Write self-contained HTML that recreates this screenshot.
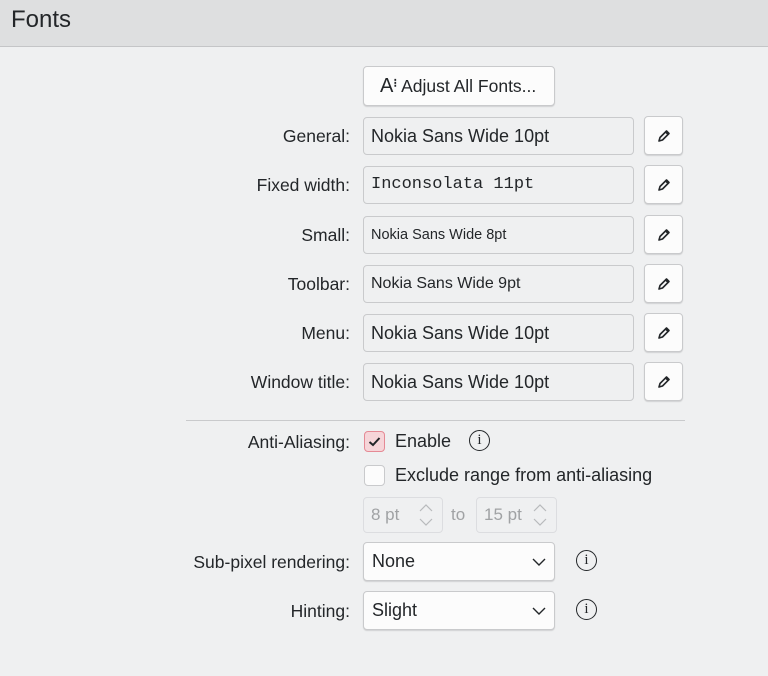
<!DOCTYPE html><html><head><style>
body{margin:0;width:768px;height:676px;background:#eff0f1;font-family:"Liberation Sans",sans-serif;color:#232629;position:relative;overflow:hidden}
.hdr{position:absolute;left:0;top:0;width:768px;height:46px;background:#dedfe0;border-bottom:1px solid #c4c5c7;}
.hdr span{position:absolute;left:11px;top:6px;font-size:24px}
.a{position:absolute}
.lbl{position:absolute;right:418px;font-size:17.5px;text-align:right;white-space:nowrap}
.fld{position:absolute;left:363px;width:271px;height:38px;border:1px solid #c9cacc;border-radius:4px;background:#eff0f1;box-sizing:border-box;font-size:18px;line-height:36px;padding-left:7px}
.btn{position:absolute;left:644px;width:39px;height:39px;border:1px solid #c9cacc;border-radius:4px;background:#fcfcfc;box-sizing:border-box;box-shadow:0 1px 1px #d0d1d2}
.btn svg{position:absolute;left:11px;top:11px}
.combo{position:absolute;left:363px;width:192px;height:39px;border:1px solid #c9cacc;border-radius:4px;background:#fcfcfc;box-sizing:border-box;font-size:18px;line-height:37px;padding-left:8px;box-shadow:0 1px 1px #d0d1d2}
.combo svg{position:absolute;right:8px;top:14px}
.info{position:absolute;width:19px;height:19px;border:1.6px solid #232629;border-radius:50%;font-size:15px;text-align:center;line-height:19px;font-family:"Liberation Serif",serif}
</style></head><body>
<div class="hdr"><span>Fonts</span></div>
<div class="a" style="left:363px;top:66px;width:192px;height:40px;border:1px solid #c9cacc;border-radius:4px;background:#fcfcfc;box-sizing:border-box;box-shadow:0 1px 1px #d0d1d2;font-size:17.5px;line-height:38px;padding-left:16px;white-space:nowrap"><span style="font-size:20px">A</span><span style="font-size:12px;position:relative;top:-5px;font-weight:bold">⁝</span> Adjust All Fonts...</div>

<div class="lbl" style="top:126px">General:</div>
<div class="fld" style="top:117px">Nokia Sans Wide 10pt</div>
<div class="lbl" style="top:175px">Fixed width:</div>
<div class="fld" style="top:166px;font-family:'Liberation Mono',monospace;font-size:17px">Inconsolata 11pt</div>
<div class="lbl" style="top:225px">Small:</div>
<div class="fld" style="top:216px;font-size:14.5px">Nokia Sans Wide 8pt</div>
<div class="lbl" style="top:274px">Toolbar:</div>
<div class="fld" style="top:265px;font-size:16px">Nokia Sans Wide 9pt</div>
<div class="lbl" style="top:323px">Menu:</div>
<div class="fld" style="top:314px">Nokia Sans Wide 10pt</div>
<div class="lbl" style="top:372px">Window title:</div>
<div class="fld" style="top:363px">Nokia Sans Wide 10pt</div>

<div class="btn" style="top:116px"><svg width="16" height="16" viewBox="0 0 16 16"><path d="M3 13 L4 9.5 L10.5 3 L13 5.5 L6.5 12 Z" fill="none" stroke="#232629" stroke-width="1.6" stroke-linejoin="round"/><path d="M9 4.5 L11.5 7 L13 5.5 L10.5 3Z" fill="#232629"/></svg></div>
<div class="btn" style="top:165px"><svg width="16" height="16" viewBox="0 0 16 16"><path d="M3 13 L4 9.5 L10.5 3 L13 5.5 L6.5 12 Z" fill="none" stroke="#232629" stroke-width="1.6" stroke-linejoin="round"/><path d="M9 4.5 L11.5 7 L13 5.5 L10.5 3Z" fill="#232629"/></svg></div>
<div class="btn" style="top:215px"><svg width="16" height="16" viewBox="0 0 16 16"><path d="M3 13 L4 9.5 L10.5 3 L13 5.5 L6.5 12 Z" fill="none" stroke="#232629" stroke-width="1.6" stroke-linejoin="round"/><path d="M9 4.5 L11.5 7 L13 5.5 L10.5 3Z" fill="#232629"/></svg></div>
<div class="btn" style="top:264px"><svg width="16" height="16" viewBox="0 0 16 16"><path d="M3 13 L4 9.5 L10.5 3 L13 5.5 L6.5 12 Z" fill="none" stroke="#232629" stroke-width="1.6" stroke-linejoin="round"/><path d="M9 4.5 L11.5 7 L13 5.5 L10.5 3Z" fill="#232629"/></svg></div>
<div class="btn" style="top:313px"><svg width="16" height="16" viewBox="0 0 16 16"><path d="M3 13 L4 9.5 L10.5 3 L13 5.5 L6.5 12 Z" fill="none" stroke="#232629" stroke-width="1.6" stroke-linejoin="round"/><path d="M9 4.5 L11.5 7 L13 5.5 L10.5 3Z" fill="#232629"/></svg></div>
<div class="btn" style="top:362px"><svg width="16" height="16" viewBox="0 0 16 16"><path d="M3 13 L4 9.5 L10.5 3 L13 5.5 L6.5 12 Z" fill="none" stroke="#232629" stroke-width="1.6" stroke-linejoin="round"/><path d="M9 4.5 L11.5 7 L13 5.5 L10.5 3Z" fill="#232629"/></svg></div>

<div class="a" style="left:186px;top:420px;width:499px;height:1px;background:#c9cacc"></div>

<div class="lbl" style="top:432px">Anti-Aliasing:</div>
<div class="a" style="left:364px;top:431px;width:21px;height:21px;border:1px solid #e58a95;background:#f6d5d9;border-radius:4px;box-sizing:border-box"><svg width="19" height="19" viewBox="0 0 19 19"><path d="M4.5 10 L8 13 L14.5 6" fill="none" stroke="#232629" stroke-width="2"/></svg></div>
<div class="a" style="left:395px;top:431px;font-size:18px">Enable</div>
<div class="info" style="left:469px;top:430px">i</div>
<div class="a" style="left:364px;top:465px;width:21px;height:21px;border:1px solid #c9cacc;background:#fcfcfc;border-radius:4px;box-sizing:border-box"></div>
<div class="a" style="left:395px;top:465px;font-size:18px">Exclude range from anti-aliasing</div>

<div class="a" style="left:363px;top:497px;width:80px;height:36px;border:1px solid #dcdde0;border-radius:4px;box-sizing:border-box;color:#a0a2a4;font-size:17px;line-height:34px;padding-left:7px">8 pt</div>
<svg class="a" style="left:417px;top:499px" width="20" height="32"><path d="M3 12 L9 6 L15 12 M3 20 L9 26 L15 20" fill="none" stroke="#b8babc" stroke-width="1.2"/></svg>
<div class="a" style="left:451px;top:505px;font-size:17px;color:#a0a2a4">to</div>
<div class="a" style="left:476px;top:497px;width:81px;height:36px;border:1px solid #dcdde0;border-radius:4px;box-sizing:border-box;color:#a0a2a4;font-size:17px;line-height:34px;padding-left:7px">15 pt</div>
<svg class="a" style="left:531px;top:499px" width="20" height="32"><path d="M3 12 L9 6 L15 12 M3 20 L9 26 L15 20" fill="none" stroke="#b8babc" stroke-width="1.2"/></svg>

<div class="lbl" style="top:552px">Sub-pixel rendering:</div>
<div class="combo" style="top:542px">None<svg width="14" height="10"><path d="M1 2 L7 8 L13 2" fill="none" stroke="#232629" stroke-width="1.4"/></svg></div>
<div class="info" style="left:576px;top:550px">i</div>
<div class="lbl" style="top:601px">Hinting:</div>
<div class="combo" style="top:591px">Slight<svg width="14" height="10"><path d="M1 2 L7 8 L13 2" fill="none" stroke="#232629" stroke-width="1.4"/></svg></div>
<div class="info" style="left:576px;top:599px">i</div>
</body></html>
